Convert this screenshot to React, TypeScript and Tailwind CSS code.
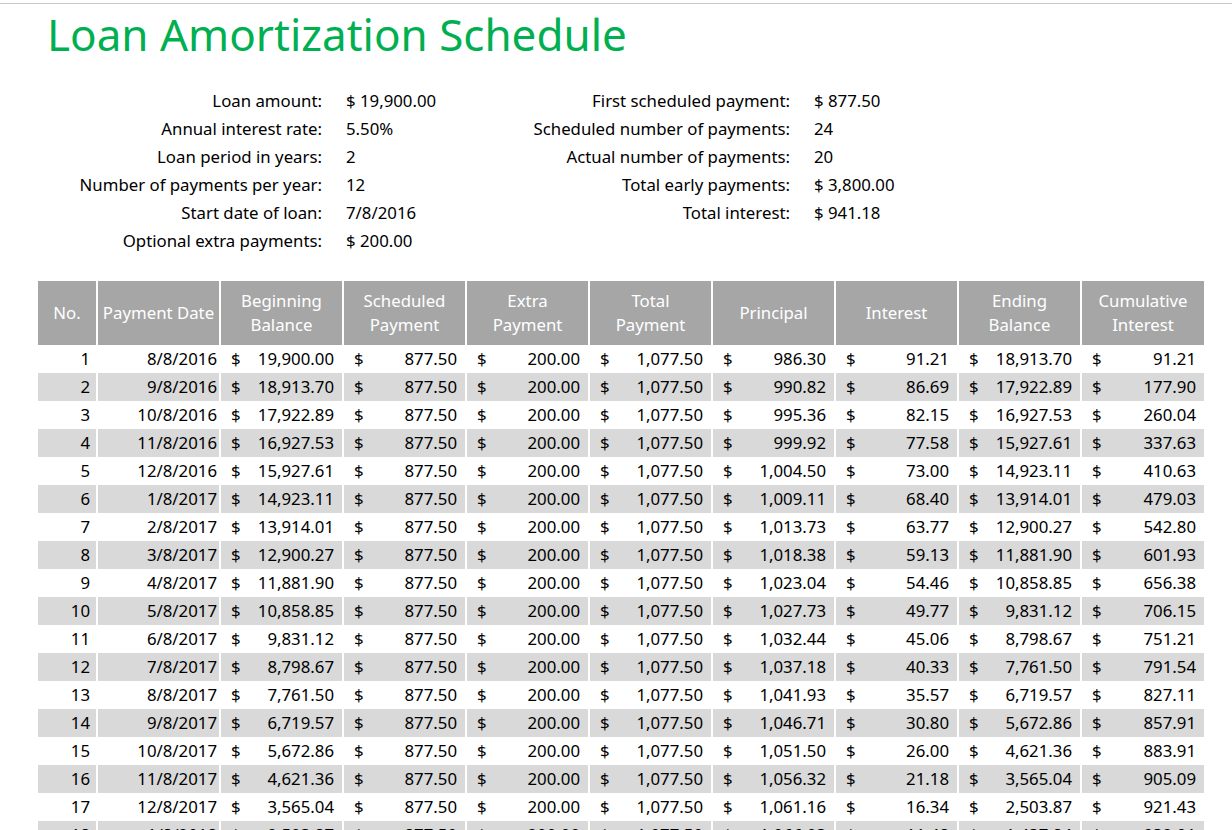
const rows: string[][] = [
  ["1", "8/8/2016", "19,900.00", "877.50", "200.00", "1,077.50", "986.30", "91.21", "18,913.70", "91.21"],
  ["2", "9/8/2016", "18,913.70", "877.50", "200.00", "1,077.50", "990.82", "86.69", "17,922.89", "177.90"],
  ["3", "10/8/2016", "17,922.89", "877.50", "200.00", "1,077.50", "995.36", "82.15", "16,927.53", "260.04"],
  ["4", "11/8/2016", "16,927.53", "877.50", "200.00", "1,077.50", "999.92", "77.58", "15,927.61", "337.63"],
  ["5", "12/8/2016", "15,927.61", "877.50", "200.00", "1,077.50", "1,004.50", "73.00", "14,923.11", "410.63"],
  ["6", "1/8/2017", "14,923.11", "877.50", "200.00", "1,077.50", "1,009.11", "68.40", "13,914.01", "479.03"],
  ["7", "2/8/2017", "13,914.01", "877.50", "200.00", "1,077.50", "1,013.73", "63.77", "12,900.27", "542.80"],
  ["8", "3/8/2017", "12,900.27", "877.50", "200.00", "1,077.50", "1,018.38", "59.13", "11,881.90", "601.93"],
  ["9", "4/8/2017", "11,881.90", "877.50", "200.00", "1,077.50", "1,023.04", "54.46", "10,858.85", "656.38"],
  ["10", "5/8/2017", "10,858.85", "877.50", "200.00", "1,077.50", "1,027.73", "49.77", "9,831.12", "706.15"],
  ["11", "6/8/2017", "9,831.12", "877.50", "200.00", "1,077.50", "1,032.44", "45.06", "8,798.67", "751.21"],
  ["12", "7/8/2017", "8,798.67", "877.50", "200.00", "1,077.50", "1,037.18", "40.33", "7,761.50", "791.54"],
  ["13", "8/8/2017", "7,761.50", "877.50", "200.00", "1,077.50", "1,041.93", "35.57", "6,719.57", "827.11"],
  ["14", "9/8/2017", "6,719.57", "877.50", "200.00", "1,077.50", "1,046.71", "30.80", "5,672.86", "857.91"],
  ["15", "10/8/2017", "5,672.86", "877.50", "200.00", "1,077.50", "1,051.50", "26.00", "4,621.36", "883.91"],
  ["16", "11/8/2017", "4,621.36", "877.50", "200.00", "1,077.50", "1,056.32", "21.18", "3,565.04", "905.09"],
  ["17", "12/8/2017", "3,565.04", "877.50", "200.00", "1,077.50", "1,061.16", "16.34", "2,503.87", "921.43"],
  ["18", "1/8/2018", "2,503.87", "877.50", "200.00", "1,077.50", "1,066.03", "11.48", "1,437.84", "932.91"],
];

const headers = [
  ["No."],
  ["Payment Date"],
  ["Beginning", "Balance"],
  ["Scheduled", "Payment"],
  ["Extra", "Payment"],
  ["Total", "Payment"],
  ["Principal"],
  ["Interest"],
  ["Ending", "Balance"],
  ["Cumulative", "Interest"],
];

const leftInfo = [
  ["Loan amount:", "$ 19,900.00"],
  ["Annual interest rate:", "5.50%"],
  ["Loan period in years:", "2"],
  ["Number of payments per year:", "12"],
  ["Start date of loan:", "7/8/2016"],
  ["Optional extra payments:", "$ 200.00"],
];

const rightInfo = [
  ["First scheduled payment:", "$ 877.50"],
  ["Scheduled number of payments:", "24"],
  ["Actual number of payments:", "20"],
  ["Total early payments:", "$ 3,800.00"],
  ["Total interest:", "$ 941.18"],
];

const cols = "grid grid-cols-[58px_123px_123px_123px_123px_123px_123px_123px_123px_124px]";

export default function App() {
  return (
    <div className="h-[830px] w-[1232px] overflow-hidden bg-white text-[16.8px] text-black [font-family:Tahoma,'DejaVu_Sans_Condensed','Liberation_Sans',sans-serif]">
      <div className="h-[4px] border-b border-[#c8c8c8]" />
      <h1 className="h-[83px] pl-[47px] pt-[2px] text-[44px] leading-[56px] text-[#00b050]">
        Loan Amortization Schedule
      </h1>
      <div className="flex">
        <div className="grid grid-cols-[322px_120px] gap-x-[24px]">
          {leftInfo.map(([l, v]) => (
            <div key={l} className="contents">
              <div className="h-[28px] whitespace-nowrap text-right leading-[28px]">{l}</div>
              <div className="h-[28px] whitespace-nowrap leading-[28px]">{v}</div>
            </div>
          ))}
        </div>
        <div className="grid grid-cols-[324px_120px] content-start gap-x-[24px]">
          {rightInfo.map(([l, v]) => (
            <div key={l} className="contents">
              <div className="h-[28px] whitespace-nowrap text-right leading-[28px]">{l}</div>
              <div className="h-[28px] whitespace-nowrap leading-[28px]">{v}</div>
            </div>
          ))}
        </div>
      </div>
      <div className="ml-[38px] mt-[26px] w-[1166px]">
        <div className={`${cols} h-[64px] bg-[#a6a6a6] text-white`}>
          {headers.map((h, i) => (
            <div
              key={i}
              className={`flex flex-col items-center justify-center whitespace-nowrap leading-[24px] ${i > 0 ? "border-l-2 border-white" : ""}`}
            >
              {h.map((t) => (
                <span key={t}>{t}</span>
              ))}
            </div>
          ))}
        </div>
        {rows.map((r, ri) => (
          <div key={ri} className={`${cols} h-[28px] leading-[28px] ${ri % 2 ? "bg-[#d9d9d9]" : "bg-white"}`}>
            <div className="pr-[6px] text-right">{r[0]}</div>
            <div className="border-l-2 border-white pr-[2px] text-right">{r[1]}</div>
            {r.slice(2).map((v, ci) => (
              <div key={ci} className="flex justify-between border-l-2 border-white pl-[10px] pr-[8px]">
                <span>$</span>
                <span>{v}</span>
              </div>
            ))}
          </div>
        ))}
      </div>
    </div>
  );
}
